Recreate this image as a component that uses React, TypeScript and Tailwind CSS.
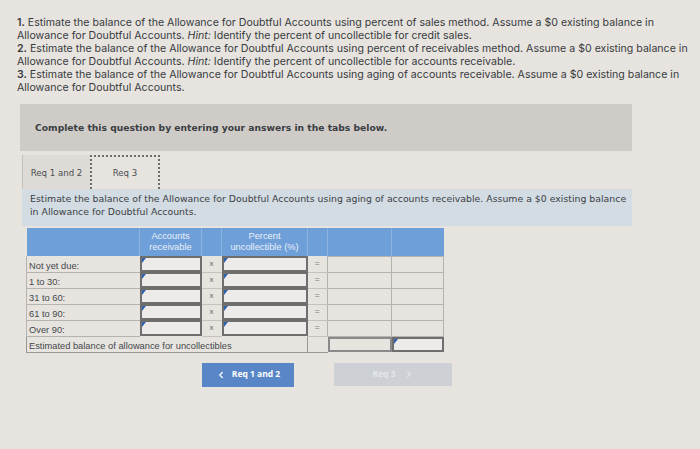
import { ChevronLeft, ChevronRight } from "lucide-react";

const rows = ["Not yet due:", "1 to 30:", "31 to 60:", "61 to 90:", "Over 90:"];

function Marker() {
  return (
    <span className="absolute left-0 top-0 h-0 w-0 border-t-[5px] border-r-[4px] border-t-[#2f62b0] border-r-transparent" />
  );
}

function InputBox() {
  return (
    <div className="relative h-full w-full border-2 border-[#6e6e6e] bg-[#ecebe7]">
      <Marker />
    </div>
  );
}

export default function App() {
  return (
    <div className="w-[700px] h-[449px] overflow-hidden bg-[#e7e4df] pl-[17px] pt-[16px] text-[#383b40]">
      <div className="w-[672px] font-['Inter',sans-serif] text-[10.6px] leading-[13px] whitespace-nowrap">
        <p>
          <span className="font-semibold">1.</span> Estimate the balance of the Allowance for Doubtful Accounts using percent of sales
          method. Assume a $0 existing balance in
          <br />
          Allowance for Doubtful Accounts. <i>Hint:</i> Identify the percent of uncollectible for credit sales.
        </p>
        <p>
          <span className="font-semibold">2.</span> Estimate the balance of the Allowance for Doubtful Accounts using percent of
          receivables method. Assume a $0 existing balance in
          <br />
          Allowance for Doubtful Accounts. <i>Hint:</i> Identify the percent of uncollectible for accounts receivable.
        </p>
        <p>
          <span className="font-semibold">3.</span> Estimate the balance of the Allowance for Doubtful Accounts using aging of accounts
          receivable. Assume a $0 existing balance in
          <br />
          Allowance for Doubtful Accounts.
        </p>
      </div>

      <div className="mt-[10px] ml-[3px] flex h-[47px] w-[612px] items-center bg-[#cfccc8] pl-[15px] font-['DejaVu_Sans',sans-serif] text-[9.2px] font-bold text-[#3a3d42]">
        Complete this question by entering your answers in the tabs below.
      </div>

      <div className="ml-[5px] mt-[4px] w-[610px] font-['DejaVu_Sans',sans-serif]">
        <div className="flex h-[34px] items-stretch text-[8.6px] text-[#4a4d52]">
          <div className="flex w-[68px] items-center justify-center border-l border-[#c2c0bc] bg-[#dedbd6] pt-[2px]">
            Req 1 and 2
          </div>
          <div className="flex w-[70px] items-center justify-center border-2 border-dotted border-b-0 border-[#6c6c6c] bg-[#e7e4df]">
            Req 3
          </div>
        </div>
        <div className="h-[37px] bg-[#d2dce2] px-[8px] pt-[3px] text-[9.35px] leading-[13px] text-[#3c4046] whitespace-nowrap">
          Estimate the balance of the Allowance for Doubtful Accounts using aging of accounts receivable. Assume a $0 existing balance
          <br />
          in Allowance for Doubtful Accounts.
        </div>
      </div>

      <table className="ml-[9px] mt-[2px] border-collapse font-['Liberation_Sans',sans-serif] text-[9.3px] text-[#44474c]">
        <colgroup>
          <col className="w-[113px]" />
          <col className="w-[62px]" />
          <col className="w-[20px]" />
          <col className="w-[86px]" />
          <col className="w-[20px]" />
          <col className="w-[64px]" />
          <col className="w-[52px]" />
        </colgroup>
        <thead>
          <tr className="h-[28px] bg-[#6f9fd8] text-center leading-[11px] text-[#e9f0f8]">
            <th className="border-r border-[#8db3e3]" />
            <th className="border-r border-[#8db3e3] font-normal">
              Accounts
              <br />
              receivable
            </th>
            <th className="border-r border-[#8db3e3]" />
            <th className="border-r border-[#8db3e3] font-normal">
              Percent
              <br />
              uncollectible (%)
            </th>
            <th className="border-r border-[#8db3e3]" />
            <th className="border-r border-[#8db3e3]" />
            <th />
          </tr>
        </thead>
        <tbody>
          {rows.map((r) => (
            <tr key={r} className="h-[16px]">
              <td className="border-b border-l border-[#b5b3af] pl-[2px] align-bottom leading-[11px]">{r}</td>
              <td className="h-[16px] p-0">
                <InputBox />
              </td>
              <td className="border-b border-[#c4c2be] text-center text-[8px] text-[#666]">x</td>
              <td className="h-[16px] p-0">
                <InputBox />
              </td>
              <td className="border-b border-[#c4c2be] text-center text-[8px] text-[#777]">=</td>
              <td className="border border-[#b5b3af]" />
              <td className="border border-[#b5b3af]" />
            </tr>
          ))}
          <tr className="h-[16px]">
            <td colSpan={4} className="border-b border-l border-[#9a9895] pl-[2px] align-bottom leading-[11px] whitespace-nowrap">
              Estimated balance of allowance for uncollectibles
            </td>
            <td className="border-b border-l border-[#9a9895]" />
            <td className="h-[16px] p-0">
              <div className="h-full w-full border-2 border-[#8a8a8a] bg-[#e7e4df]" />
            </td>
            <td className="h-[16px] p-0">
              <InputBox />
            </td>
          </tr>
        </tbody>
      </table>

      <div className="mt-[10px] flex items-start font-['Open_Sans',sans-serif] text-[8.5px] font-bold">
        <div className="ml-[185px] flex h-[24px] w-[92px] items-center justify-center gap-[6px] bg-[#5886c6] text-white">
          <ChevronLeft className="h-[10px] w-[10px]" strokeWidth={3} />
          Req 1 and 2
        </div>
        <div className="ml-[40px] flex h-[23px] w-[118px] items-center justify-center gap-[8px] bg-[#cdd1d6] text-[#e3e6ea]">
          Req 3
          <ChevronRight className="h-[10px] w-[10px]" strokeWidth={3} />
        </div>
      </div>
    </div>
  );
}
